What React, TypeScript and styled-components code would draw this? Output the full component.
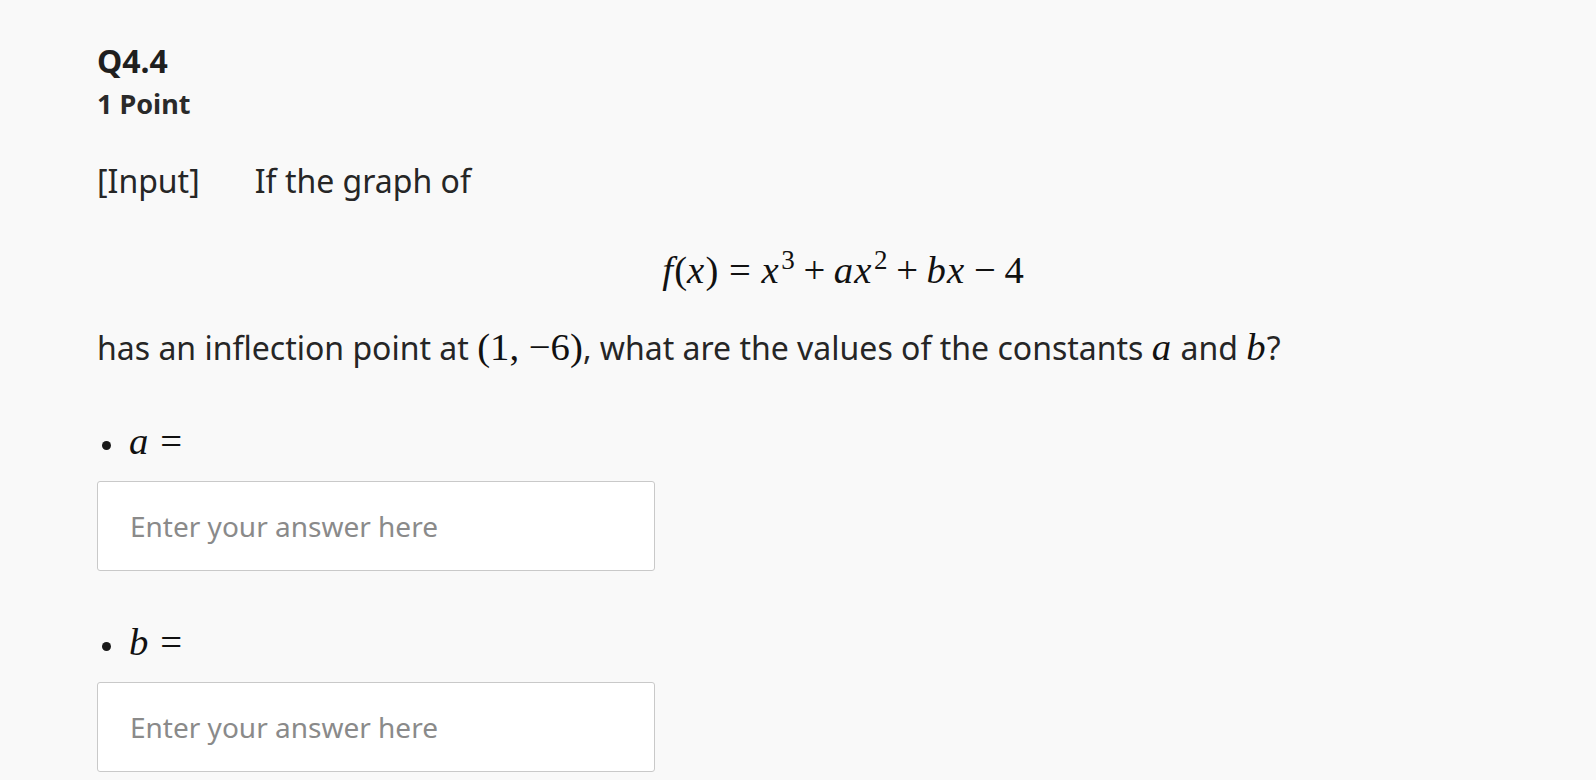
import styled, { createGlobalStyle } from 'styled-components';

const GlobalStyle = createGlobalStyle`
  html, body {
    margin: 0;
    padding: 0;
    background: #f9f9f9;
  }
  body {
    font-family: "Noto Sans", "Open Sans", sans-serif;
    color: #262626;
  }
`;

const Page = styled.main`
  display: flex;
  flex-direction: column;
  padding: 41px 7px 0 97px;
  min-height: 780px;
  box-sizing: border-box;
`;

const QuestionTitle = styled.h2`
  margin: 0;
  font-size: 32px;
  line-height: 40px;
  font-weight: 700;
  color: #1f1f1f;
`;

const Points = styled.div`
  margin-top: 5px;
  font-size: 27px;
  line-height: 36px;
  font-weight: 700;
  color: #2a2a2a;
`;

const Paragraph = styled.p<{ $gap: number }>`
  margin: ${({ $gap }) => $gap}px 0 0;
  font-size: 32px;
  line-height: 48px;
`;

const Tag = styled.span`
  display: inline-block;
  margin-right: 55px;
`;

const DisplayMath = styled.div`
  margin-top: 35px;
  text-align: center;
  font-family: "Liberation Serif", "DejaVu Serif", serif;
  font-size: 38.7px;
  line-height: 60px;
  color: #111;
`;

const InlineMath = styled.span`
  font-family: "Liberation Serif", "DejaVu Serif", serif;
  font-size: 1.21em;
  line-height: 1;
  color: #111;
`;

const Var = styled.i`
  font-style: italic;
  padding-right: 0.03em;
`;

const Sup = styled.sup`
  font-size: 0.7em;
  line-height: 0;
  vertical-align: 0.5em;
  margin-left: 0.05em;
`;

const Bin = styled.span`
  margin: 0 0.2222em;
`;

const Rel = styled.span`
  margin: 0 0.2778em;
`;

const AnswerList = styled.ul`
  list-style: none;
  margin: 0;
  padding: 0;
  display: flex;
  flex-direction: column;
`;

const AnswerItem = styled.li<{ $gap: number }>`
  margin-top: ${({ $gap }) => $gap}px;
  font-size: 32px;
  line-height: 48px;
`;

const Dot = styled.span`
  display: inline-block;
  width: 9px;
  height: 9px;
  border-radius: 50%;
  background: #1a1a1a;
  vertical-align: middle;
  margin: 0 18px 0 5px;
`;

const AnswerInput = styled.input`
  display: block;
  box-sizing: border-box;
  width: 558px;
  height: 90px;
  margin-top: 15px;
  padding: 0 20px 0 32px;
  background: #fff;
  border: 1px solid #c9c9c9;
  border-radius: 3px;
  font-family: "Noto Sans", "Open Sans", sans-serif;
  font-size: 28px;
  color: #262626;
  outline: none;

  &::placeholder {
    color: #8a8a8a;
  }
`;

const answers = [
  { name: 'a', gap: 46 },
  { name: 'b', gap: 48 },
];

export default function App() {
  return (
    <>
      <GlobalStyle />
      <Page>
        <QuestionTitle>Q4.4</QuestionTitle>
        <Points>1 Point</Points>
        <Paragraph $gap={35}>
          <Tag>[Input]</Tag>If the graph of
        </Paragraph>
        <DisplayMath>
          <Var>f</Var>(<Var>x</Var>)<Rel>=</Rel>
          <Var>x</Var>
          <Sup>3</Sup>
          <Bin>+</Bin>
          <Var>a</Var>
          <Var>x</Var>
          <Sup>2</Sup>
          <Bin>+</Bin>
          <Var>b</Var>
          <Var>x</Var>
          <Bin>−</Bin>4
        </DisplayMath>
        <Paragraph $gap={24}>
          has an inflection point at{' '}
          <InlineMath>(1, −6)</InlineMath>
          , what are the values of the constants{' '}
          <InlineMath>
            <Var>a</Var>
          </InlineMath>{' '}
          and{' '}
          <InlineMath>
            <Var>b</Var>
          </InlineMath>
          ?
        </Paragraph>
        <AnswerList>
          {answers.map((item) => (
            <AnswerItem key={item.name} $gap={item.gap}>
              <Dot />
              <InlineMath>
                <Var>{item.name}</Var>
                <Rel>=</Rel>
              </InlineMath>
              <AnswerInput type="text" placeholder="Enter your answer here" />
            </AnswerItem>
          ))}
        </AnswerList>
      </Page>
    </>
  );
}
